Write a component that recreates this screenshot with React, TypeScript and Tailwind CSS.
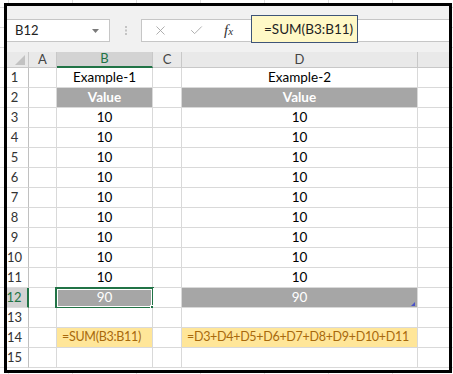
import { X, Check } from 'lucide-react';

type Kind = 'plain' | 'head' | 'total' | 'note';

interface Row {
  n: number;
  b?: string;
  d?: string;
  kind?: Kind;
}

const rows: Row[] = [
  { n: 1, b: 'Example-1', d: 'Example-2' },
  { n: 2, b: 'Value', d: 'Value', kind: 'head' },
  ...Array.from({ length: 9 }, (_, i) => ({ n: i + 3, b: '10', d: '10' })),
  { n: 12, b: '90', d: '90', kind: 'total' },
  { n: 13 },
  { n: 14, b: '=SUM(B3:B11)', d: '=D3+D4+D5+D6+D7+D8+D9+D10+D11', kind: 'note' },
  { n: 15 },
];

const kindClass: Record<Kind, string> = {
  plain: 'bg-white text-black justify-center text-[13.5px]',
  head: 'bg-[#a6a6a6] text-white font-bold justify-center text-[13.5px]',
  total: 'bg-[#a6a6a6] text-white justify-center text-[13.5px]',
  note: 'bg-[#ffe699] text-[#a8690c] justify-start pl-[5px] text-[12.5px] tracking-[-0.3px]',
};

function Cell({ w, text, kind, children }: { w: string; text?: string; kind?: Kind; children?: React.ReactNode }) {
  const k = text !== undefined ? kind ?? 'plain' : 'plain';
  return (
    <div
      className={`${w} relative flex items-center shrink-0 border-r border-b border-[#d9d9d9] whitespace-nowrap ${kindClass[k]}`}
    >
      {text}
      {children}
    </div>
  );
}

function FormulaBar() {
  return (
    <div className="h-[46px] bg-[#f1f1f1] flex flex-col shrink-0">
      <div className="h-[13px]" />
      <div className="relative flex h-[23px]">
        {/* name box */}
        <div className="w-[103px] bg-white border border-l-0 border-[#c6c6c6] flex items-center pl-[8px] text-[13px] text-[#222]">
          B12
          <svg className="ml-auto mr-[10px]" width="7" height="4" viewBox="0 0 7 4">
            <path d="M0 0h7L3.5 4z" fill="#7a7a7a" />
          </svg>
        </div>
        <div className="w-[31px] flex items-center justify-center">
          <svg width="2" height="9" viewBox="0 0 2 9">
            <rect x="0" y="0" width="2" height="2" fill="#c4c4c4" />
            <rect x="0" y="3.5" width="2" height="2" fill="#c4c4c4" />
            <rect x="0" y="7" width="2" height="2" fill="#c4c4c4" />
          </svg>
        </div>
        {/* formula input */}
        <div className="flex-1 bg-white border border-r-0 border-[#c6c6c6] flex items-center">
          <X className="ml-[11px] text-[#a3a3a3]" size={15} strokeWidth={1.4} />
          <Check className="ml-[21px] text-[#a3a3a3]" size={15} strokeWidth={1.4} />
          <span className="ml-[20px] italic text-[15px] leading-none text-[#333] [font-family:'Liberation_Serif',serif]">
            f<span className="text-[11px]">x</span>
          </span>
        </div>
        {/* highlighted formula callout */}
        <div className="absolute left-[244px] top-[-4px] w-[107px] h-[28px] bg-[#fff8c6] border-[1.5px] border-[#3e5478] flex items-center pl-[12px] text-[13.5px] text-[#222]">
          =SUM(B3:B11)
        </div>
      </div>
      <div className="flex-1" />
    </div>
  );
}

function ColumnHeaders() {
  const base = 'shrink-0 flex items-center justify-center border-r border-b border-[#c8c8c8] text-[13px] text-[#444]';
  return (
    <div className="flex h-[16px] bg-[#e9e9e9]">
      <div className={`w-[22px] ${base} justify-end items-end pr-[3px] pb-[2px]`}>
        <svg width="10" height="10" viewBox="0 0 10 10">
          <path d="M10 0V10H0z" fill="#c2c2c2" />
        </svg>
      </div>
      <div className={`w-[28px] ${base}`}>A</div>
      <div className={`w-[96px] ${base} bg-[#d3d3d3] text-[#217346] border-b-2 border-b-[#217346]`}>B</div>
      <div className={`w-[29px] ${base}`}>C</div>
      <div className={`w-[236px] ${base}`}>D</div>
      <div className={`flex-1 ${base} border-r-0`} />
    </div>
  );
}

export default function App() {
  return (
    <div className="w-[453px] h-[374px] overflow-hidden bg-white bg-[linear-gradient(to_right,#dedede_1px,transparent_1px),linear-gradient(to_bottom,#dedede_1px,transparent_1px)] bg-[size:64px_20px] bg-[position:8px_7px] pt-[3px] pl-[4px] [font-family:Lato,sans-serif]">
      <div className="w-[448px] h-[370px] border-[3px] border-black overflow-hidden bg-white flex flex-col">
        <FormulaBar />
        <ColumnHeaders />
        {rows.map((r) => {
          const sel = r.n === 12;
          return (
            <div key={r.n} className="flex h-[20px] shrink-0">
              <div
                className={`w-[22px] shrink-0 flex items-center justify-center pr-[6px] border-b border-[#dcdcdc] text-[13px] ${
                  sel
                    ? 'bg-[#d3d3d3] text-[#217346] border-r-2 border-r-[#217346]'
                    : 'bg-white text-[#333] border-r border-r-[#c0c0c0]'
                }`}
              >
                {r.n}
              </div>
              <Cell w="w-[28px]" />
              <Cell w="w-[96px]" text={r.b} kind={r.kind}>
                {sel && (
                  <>
                    <div className="absolute left-[-2px] top-[-1px] right-[-2px] bottom-[-2px] border-2 border-[#217346] shadow-[inset_0_0_0_1px_white]" />
                    <div className="absolute right-[-5px] bottom-[-5px] w-[7px] h-[7px] bg-[#217346] border border-white" />
                  </>
                )}
              </Cell>
              <Cell w="w-[29px]" />
              <Cell w="w-[236px]" text={r.d} kind={r.kind}>
                {sel && (
                  <svg className="absolute right-[2px] bottom-[1px]" width="4" height="4" viewBox="0 0 4 4">
                    <path d="M4 0V4H0z" fill="#4b52c8" />
                  </svg>
                )}
              </Cell>
              <div className="flex-1 border-b border-[#d9d9d9] bg-white" />
            </div>
          );
        })}
      </div>
    </div>
  );
}
